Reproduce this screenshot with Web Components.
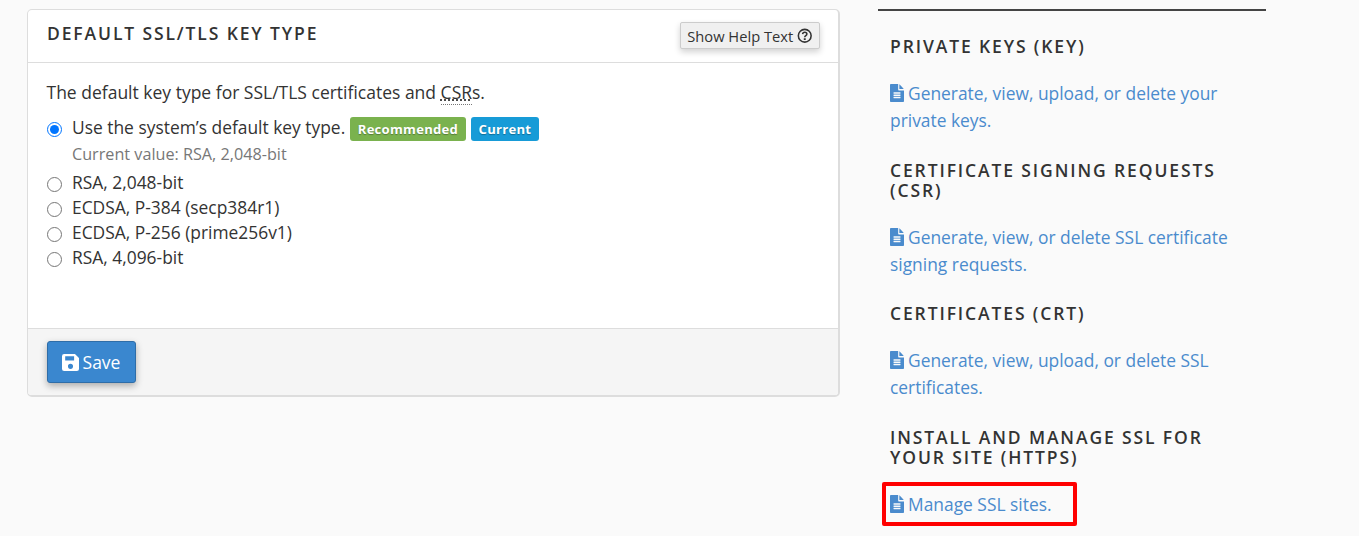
<!doctype html>
<html lang="en">
<head>
<meta charset="utf-8">
<title>SSL/TLS</title>
<style>
  html, body { margin: 0; height: 536px; overflow: hidden; }
  body {
    background: #fafafa;
    color: #333;
    font: 17.5px/25px "Open Sans", "Liberation Sans", sans-serif;
  }
  ssl-page { display: grid; }
</style>
</head>
<body>
<template id="doc-icon"><svg viewBox="0 0 1536 1792" preserveAspectRatio="none" aria-hidden="true"><path fill="currentColor" d="M1024 512V16q23 15 38 30l408 408q15 15 30 38h-476zM896 544q0 40 28 68t68 28h544v1056q0 40-28 68t-68 28H96q-40 0-68-28t-28-68V96q0-40 28-68t68-28h800v544zM1152 1376v-64q0-14-9-23t-23-9H416q-14 0-23 9t-9 23v64q0 14 9 23t23 9h704q14 0 23-9t9-23zM1152 1152v-64q0-14-9-23t-23-9H416q-14 0-23 9t-9 23v64q0 14 9 23t23 9h704q14 0 23-9t9-23zM1152 928v-64q0-14-9-23t-23-9H416q-14 0-23 9t-9 23v64q0 14 9 23t23 9h704q14 0 23-9t9-23z"/></svg></template>

<ssl-page>
  <ssl-card slot="main" heading="Default SSL/TLS Key Type">
    <p>The default key type for SSL/TLS certificates and <ssl-abbr>CSR</ssl-abbr>s.</p>
    <key-option checked hint="Current value: RSA, 2,048-bit">Use the system’s default key type.
      <status-badge tone="green">Recommended</status-badge>
      <status-badge tone="blue">Current</status-badge>
    </key-option>
    <key-option>RSA, 2,048-bit</key-option>
    <key-option>ECDSA, P-384 (secp384r1)</key-option>
    <key-option>ECDSA, P-256 (prime256v1)</key-option>
    <key-option>RSA, 4,096-bit</key-option>
  </ssl-card>
  <side-nav slot="side">
    <side-section heading="Private Keys (KEY)">
      <doc-link>Generate, view, upload, or delete your private keys.</doc-link>
    </side-section>
    <side-section heading="Certificate Signing Requests (CSR)">
      <doc-link>Generate, view, or delete SSL certificate signing requests.</doc-link>
    </side-section>
    <side-section heading="Certificates (CRT)">
      <doc-link>Generate, view, upload, or delete SSL certificates.</doc-link>
    </side-section>
    <side-section heading="Install and Manage SSL for your site (HTTPS)">
      <doc-link marked>Manage SSL sites.</doc-link>
    </side-section>
  </side-nav>
</ssl-page>

<script>
;(() => {
  const mount = (el, html) => {
    el.attachShadow({ mode: 'open' }).innerHTML = html.trim()
  }

  class SslPage extends HTMLElement {
    constructor() {
      super()
      mount(this, `
        <style>
          :host { display: block; padding: 9px 0 0 27px; }
          .cols { display: grid; grid-template-columns: 813px 388px; column-gap: 38px; align-items: start; }
        </style>
        <div class="cols"><slot name="main"></slot><slot name="side"></slot></div>
      `)
    }
  }

  class SslCard extends HTMLElement {
    constructor() {
      super()
      mount(this, `
        <style>
          :host {
            display: block;
            box-sizing: border-box;
            height: 388px;
            background: #fff;
            border: 1px solid #ddd;
            border-bottom-width: 2px;
            border-right-width: 2px;
            border-radius: 5px;
            overflow: hidden;
          }
          .wrap { display: flex; flex-direction: column; height: 100%; }
          header {
            box-sizing: border-box;
            height: 53px;
            flex: none;
            display: flex;
            justify-content: space-between;
            padding: 12px 19px 0;
            border-bottom: 1px solid #ddd;
          }
          h2 {
            margin: 0;
            font-size: 17.5px;
            line-height: 22px;
            font-weight: 600;
            letter-spacing: 1.88px;
            text-transform: uppercase;
          }
          button {
            box-sizing: border-box;
            width: 140px;
            height: 27px;
            margin: 0 -1px 0 auto;
            padding: 0;
            display: inline-flex;
            align-items: center;
            justify-content: center;
            gap: 4px;
            font: 14.7px/20px "Open Sans", sans-serif;
            color: #333;
            background: #f0f0f0;
            border: 1px solid #ccc;
            border-radius: 2px;
            box-shadow: 0 3px 6px rgba(0,0,0,.18);
          }
          button svg { width: 15.5px; height: 15.5px; display: block; }
          .body { flex: 1; padding: 17px 19px 0; }
          ::slotted(p) { margin: 0 0 10px -.5px; }
          footer {
            box-sizing: border-box;
            height: 67px;
            flex: none;
            padding: 12px 19px;
            background: #f5f5f5;
            border-top: 1px solid #ddd;
          }
          .save {
            height: 42px;
            width: 89px;
            margin: 0;
            padding: 0 1px 0 0;
            gap: 4px;
            justify-content: center;
            font-size: 17.5px;
            color: #fff;
            background: #3a87cf;
            border: 1px solid #2e6da8;
            border-radius: 3px;
            box-shadow: 0 3px 7px rgba(0,0,0,.3);
          }
          .save svg { width: 17px; height: 17px; }
        </style>
        <div class="wrap">
          <header>
            <h2>${this.getAttribute('heading')}</h2>
            <button type="button">Show Help Text
              <svg viewBox="0 0 16 16" aria-hidden="true" fill="none" stroke="#333"><circle cx="8" cy="8" r="6.6" stroke-width="1.6"/><path d="M5.8 6.3C5.9 5 6.8 4.4 8 4.4c1.3 0 2.2.8 2.2 1.8 0 1.7-2.2 1.6-2.2 3.3" stroke-width="1.6"/><path d="M7 10.6h2v1.8H7z" fill="#333" stroke="none"/></svg>
            </button>
          </header>
          <div class="body"><slot></slot></div>
          <footer>
            <button class="save" type="button">
              <svg viewBox="0 0 16 16" aria-hidden="true"><path fill="#fff" fill-rule="evenodd" d="M2 0h10.2L16 3.8V14a2 2 0 0 1-2 2H2a2 2 0 0 1-2-2V2a2 2 0 0 1 2-2zM3 2v4.2h8.4V2zm5 7.2a2.4 2.4 0 1 0 0 4.8 2.4 2.4 0 0 0 0-4.8z"/></svg>Save
            </button>
          </footer>
        </div>
      `)
    }
  }

  class SslAbbr extends HTMLElement {
    constructor() {
      super()
      mount(this, `
        <style>
          :host {
            display: inline;
            text-decoration: underline dotted;
            border-bottom: 1px dotted #777;
          }
        </style><slot></slot>
      `)
    }
  }

  class KeyOption extends HTMLElement {
    constructor() {
      super()
      const hint = this.getAttribute('hint')
      mount(this, `
        <style>
          :host { display: block; font-size: 17.4px; }
          label { display: flex; align-items: flex-start; }
          input { width: 15px; height: 15px; margin: 7px 10px 0 0; flex: none; }
          .hint { font-size: 16.2px; line-height: 25px; color: #777; height: 25px; margin: 1px 0 3px; }
          .text { display: block; }
        </style>
        <label>
          <input type="radio" name="key" ${this.hasAttribute('checked') ? 'checked' : ''}>
          <span class="text"><slot></slot>${hint ? `<div class="hint">${hint}</div>` : ''}</span>
        </label>
      `)
    }
  }

  class StatusBadge extends HTMLElement {
    constructor() {
      super()
      const bg = this.getAttribute('tone') === 'green' ? '#7ab24e' : '#179bd7'
      mount(this, `
        <style>
          :host {
            display: inline-block;
            vertical-align: 0;
            height: 24px;
            padding: 0 8px;
            background: ${bg};
            border-radius: 3px;
            color: #fff;
            font-size: 13.1px;
            line-height: 24px;
            font-weight: 700;
            letter-spacing: .25px;
            text-shadow: 0 1px 1px rgba(0,0,0,.3);
          }
        </style><slot></slot>
      `)
    }
  }

  class SideNav extends HTMLElement {
    constructor() {
      super()
      mount(this, `
        <style>
          :host { display: block; border-top: 2px solid #444; padding: 1px 12px 0; }
        </style><slot></slot>
      `)
    }
  }

  class SideSection extends HTMLElement {
    constructor() {
      super()
      mount(this, `
        <style>
          :host { display: block; padding-top: 24px; }
          h3 {
            margin: 0 0 23.8px;
            font-size: 17.5px;
            line-height: 20.2px;
            font-weight: 600;
            letter-spacing: 1.88px;
            text-transform: uppercase;
          }
        </style>
        <h3>${this.getAttribute('heading')}</h3>
        <slot></slot>
      `)
    }
  }

  class DocLink extends HTMLElement {
    constructor() {
      super()
      const icon = document.getElementById('doc-icon').content.firstElementChild.cloneNode(true)
      mount(this, `
        <style>
          :host { display: block; position: relative; font-size: 17.4px; line-height: 27px; color: #4a8bcd; padding-bottom: 1.5px; }
          svg { width: 14px; height: 18px; vertical-align: -2px; margin-right: 4px; }
          .mark {
            position: absolute;
            left: -8px;
            top: -9px;
            width: 195px;
            height: 44px;
            box-sizing: border-box;
            border: 4px solid #f00;
            border-radius: 2px;
          }
        </style>
        <span id="i"></span><slot></slot>${this.hasAttribute('marked') ? '<div class="mark"></div>' : ''}
      `)
      this.shadowRoot.getElementById('i').replaceWith(icon)
    }
  }

  customElements.define('ssl-page', SslPage)
  customElements.define('ssl-card', SslCard)
  customElements.define('ssl-abbr', SslAbbr)
  customElements.define('key-option', KeyOption)
  customElements.define('status-badge', StatusBadge)
  customElements.define('side-nav', SideNav)
  customElements.define('side-section', SideSection)
  customElements.define('doc-link', DocLink)
})()
</script>
</body>
</html>
